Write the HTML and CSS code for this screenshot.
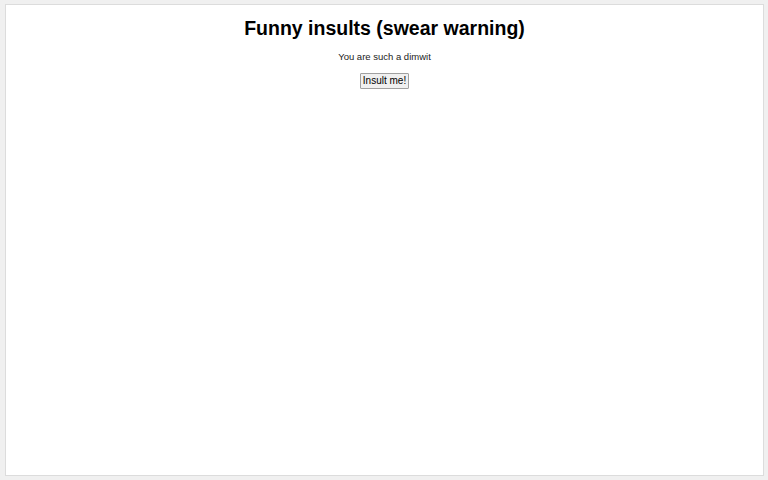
FILE: index.html
```html
<!DOCTYPE html>
<html lang="en">
<head>
  <meta charset="UTF-8" />
  <meta name="viewport" content="width=device-width, initial-scale=1.0"/>
  <title>Funny insults</title>
  <link rel="stylesheet" href="styles.css">
</head>
<body>

  <div class="page">
    <h1>Funny insults (swear warning)</h1>
    <p class="insult" id="insult">You are such a dimwit</p>
    <button class="insult-btn" onclick="insultMe()">Insult me!</button>
  </div>

  <script>
    const insults = [
      "You are such a dimwit", "You absolute muppet", "You walnut",
      "You are a sandwich short of a picnic", "You numpty"
    ];

    function insultMe() {
      const pick = insults[Math.floor(Math.random() * insults.length)];
      document.getElementById('insult').textContent = pick;
    }
  </script>

</body>
</html>
```

FILE: styles.css
```css
* {
  margin: 0;
  padding: 0;
  box-sizing: border-box;
}

html, body {
  height: 100%;
}

body {
  font-family: 'Liberation Sans', Arial, sans-serif;
  background: #f0f0f0;
  padding: 4px;
}

.page {
  background: #fff;
  border: 1px solid #dcdcdc;
  height: 472px;
  margin-left: 1px;
  width: 759px;
  text-align: center;
  padding-top: 12px;
}

h1 {
  font-size: 19.5px;
  line-height: 22px;
  font-weight: 700;
  color: #000;
  margin-bottom: 12px;
}

.insult {
  font-size: 9.5px;
  line-height: 11px;
  color: #222;
  margin-bottom: 8px;
}

.insult-btn {
  font-family: 'Liberation Sans', Arial, sans-serif;
  font-size: 10px;
  line-height: 12px;
  padding: 1px 2px;
  background: #f0f0f0;
  border: 1px solid #a0a0a0;
  border-radius: 1px;
  color: #000;
  cursor: pointer;
}
```
